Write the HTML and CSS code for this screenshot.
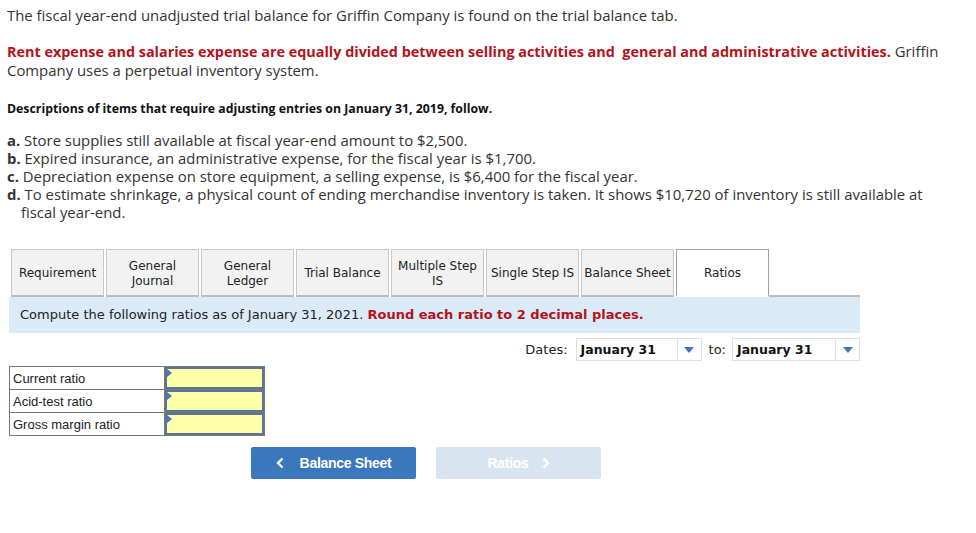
FILE: index.html
```html
<!DOCTYPE html>
<html>
<head>
<meta charset="utf-8">
<link rel="stylesheet" href="styles.css">
</head>
<body>
<div class="intro">
  <p class="p1">The fiscal year-end unadjusted trial balance for Griffin Company is found on the trial balance tab.</p>
  <p class="p2"><span class="red">Rent expense and salaries expense are equally divided between selling activities and&nbsp; general and administrative activities.</span> Griffin<br>Company uses a perpetual inventory system.</p>
  <p class="p3">Descriptions of items that require adjusting entries on January 31, 2019, follow.</p>
  <ul class="items">
    <li><b>a.</b> Store supplies still available at fiscal year-end amount to $2,500.</li>
    <li><b>b.</b> Expired insurance, an administrative expense, for the fiscal year is $1,700.</li>
    <li><b>c.</b> Depreciation expense on store equipment, a selling expense, is $6,400 for the fiscal year.</li>
    <li><b>d.</b> To estimate shrinkage, a physical count of ending merchandise inventory is taken. It shows $10,720 of inventory is still available at<br>fiscal year-end.</li>
  </ul>
</div>

<div class="work">
  <div class="tabs">
    <div class="tab">Requirement</div>
    <div class="tab">General<br>Journal</div>
    <div class="tab">General<br>Ledger</div>
    <div class="tab">Trial Balance</div>
    <div class="tab">Multiple Step<br>IS</div>
    <div class="tab">Single Step IS</div>
    <div class="tab">Balance Sheet</div>
    <div class="tab active">Ratios</div>
    <div class="tab-fill"></div>
  </div>
  <div class="instr">Compute the following ratios as of January 31, 2021. <b class="red2">Round each ratio to 2 decimal places.</b></div>
  <div class="dates">
    <span class="dlabel">Dates:</span>
    <div class="sel"><span class="sel-text">January 31</span><span class="sel-btn"><span class="tri"></span></span></div>
    <span class="dlabel to">to:</span>
    <div class="sel sel2"><span class="sel-text">January 31</span><span class="sel-btn"><span class="tri"></span></span></div>
  </div>
  <table class="ratios">
    <tr><td class="lbl">Current ratio</td><td class="inp"><div class="cell"><span class="flag"></span></div></td></tr>
    <tr><td class="lbl">Acid-test ratio</td><td class="inp"><div class="cell"><span class="flag"></span></div></td></tr>
    <tr><td class="lbl">Gross margin ratio</td><td class="inp"><div class="cell"><span class="flag"></span></div></td></tr>
  </table>
  <div class="nav">
    <div class="btn prev"><svg class="chev" width="8" height="12" viewBox="0 0 8 12"><polyline points="6.5,1.5 2,6 6.5,10.5" fill="none" stroke="#fff" stroke-width="2.4"/></svg><span>Balance Sheet</span></div>
    <div class="btn next disabled"><span>Ratios</span><svg class="chev" width="8" height="12" viewBox="0 0 8 12"><polyline points="1.5,1.5 6,6 1.5,10.5" fill="none" stroke="#fff" stroke-width="2.4"/></svg></div>
  </div>
</div>
</body>
</html>
```

FILE: styles.css
```css
* { box-sizing: border-box; }
html, body { margin: 0; padding: 0; background: #fff; }
body {
  font-family: "Open Sans", Lato, sans-serif;
  color: #333;
  font-size: 14.9px;
}
.intro { padding: 6px 0 0 7px; }
.intro p { margin: 0; line-height: 18px; }
.p2 { margin-top: 18px !important; }
.red { color: #b5121b; font-weight: bold; font-size: 14.4px; }
.p3 {
  margin-top: 18px !important;
  font-family: "Open Sans", sans-serif;
  font-weight: bold;
  font-size: 12.3px;
  color: #111;
  padding-top: 3px;
}
.items { list-style: none; margin: 13px 0 0 0; padding: 0; }
.items li { line-height: 18px; padding-left: 14px; text-indent: -14px; }
.items b { font-weight: bold; }

.work { margin: 28px 0 0 9px; width: 851px; }
.tabs { display: flex; align-items: flex-end; padding-left: 2px; }
.tab {
  width: 93px;
  height: 48px;
  margin-right: 2px;
  background: #f2f2f2;
  border: 1px solid #c8c8c8;
  border-bottom: 2px solid #bdbdbd;
  display: flex;
  align-items: center;
  justify-content: center;
  text-align: center;
  font-family: "DejaVu Sans", Verdana, sans-serif;
  font-size: 12px;
  line-height: 15px;
  color: #222;
  padding-top: 2px;
}
.tab.active { background: #fff; border-color: #a0a0a0; border-bottom: 2px solid #fff; }
.tab-fill { flex: 1; border-bottom: 2px solid #bdbdbd; height: 2px; margin-left: -2px; }
.instr {
  background: #dbeaf7;
  height: 36px;
  padding: 10px 0 0 11px;
  font-family: "DejaVu Sans", Verdana, sans-serif;
  font-size: 13px;
  color: #222;
}
.red2 { color: #b5121b; }
.dates {
  display: flex;
  justify-content: flex-end;
  align-items: center;
  margin-top: 5px;
  font-family: "DejaVu Sans", Verdana, sans-serif;
  font-size: 13px;
  color: #222;
}
.dlabel { margin-right: 8px; }
.dlabel.to { margin-left: 7px; margin-right: 6px; }
.sel {
  display: flex;
  width: 126px;
  height: 23px;
  border: 1px solid #e0e0e0;
  background: #fff;
}
.sel2 { width: 128px; }
.sel-text {
  flex: 1;
  font-weight: bold;
  color: #111;
  padding: 3px 0 0 4px;
  font-size: 12.5px;
}
.sel-btn {
  width: 24px;
  border-left: 1px solid #e0e0e0;
  display: flex;
  align-items: center;
  justify-content: center;
}
.tri {
  width: 0; height: 0;
  border-left: 5px solid transparent;
  border-right: 5px solid transparent;
  border-top: 6px solid #3f78bf;
}
.ratios {
  border-collapse: collapse;
  margin-top: 5px;
  font-family: "Liberation Sans", Arial, sans-serif;
  font-size: 13px;
  color: #222;
}
.ratios td { border: 1px solid #777; height: 23px; padding: 0; }
.lbl { width: 155px; padding-left: 3px !important; }
.inp { width: 100px; }
.cell {
  position: relative;
  height: 22px;
  background: #ffffaa;
  border: 2px solid #5a7598;
}
.flag {
  position: absolute;
  left: 0; top: 0;
  width: 0; height: 0;
  border-top: 4px solid transparent;
  border-bottom: 4px solid transparent;
  border-left: 5px solid #3f78bf;
}
.nav { display: flex; gap: 20px; margin: 11px 0 0 242px; }
.btn {
  width: 165px;
  height: 32px;
  border-radius: 2px;
  background: #3a77bc;
  color: #fff;
  font-family: "Liberation Sans", Arial, sans-serif;
  font-weight: bold;
  font-size: 14px;
  letter-spacing: -0.3px;
  display: flex;
  align-items: center;
  justify-content: center;
  gap: 16px;
}
.btn.disabled { background: #d9e4f1; gap: 13px; }
```
